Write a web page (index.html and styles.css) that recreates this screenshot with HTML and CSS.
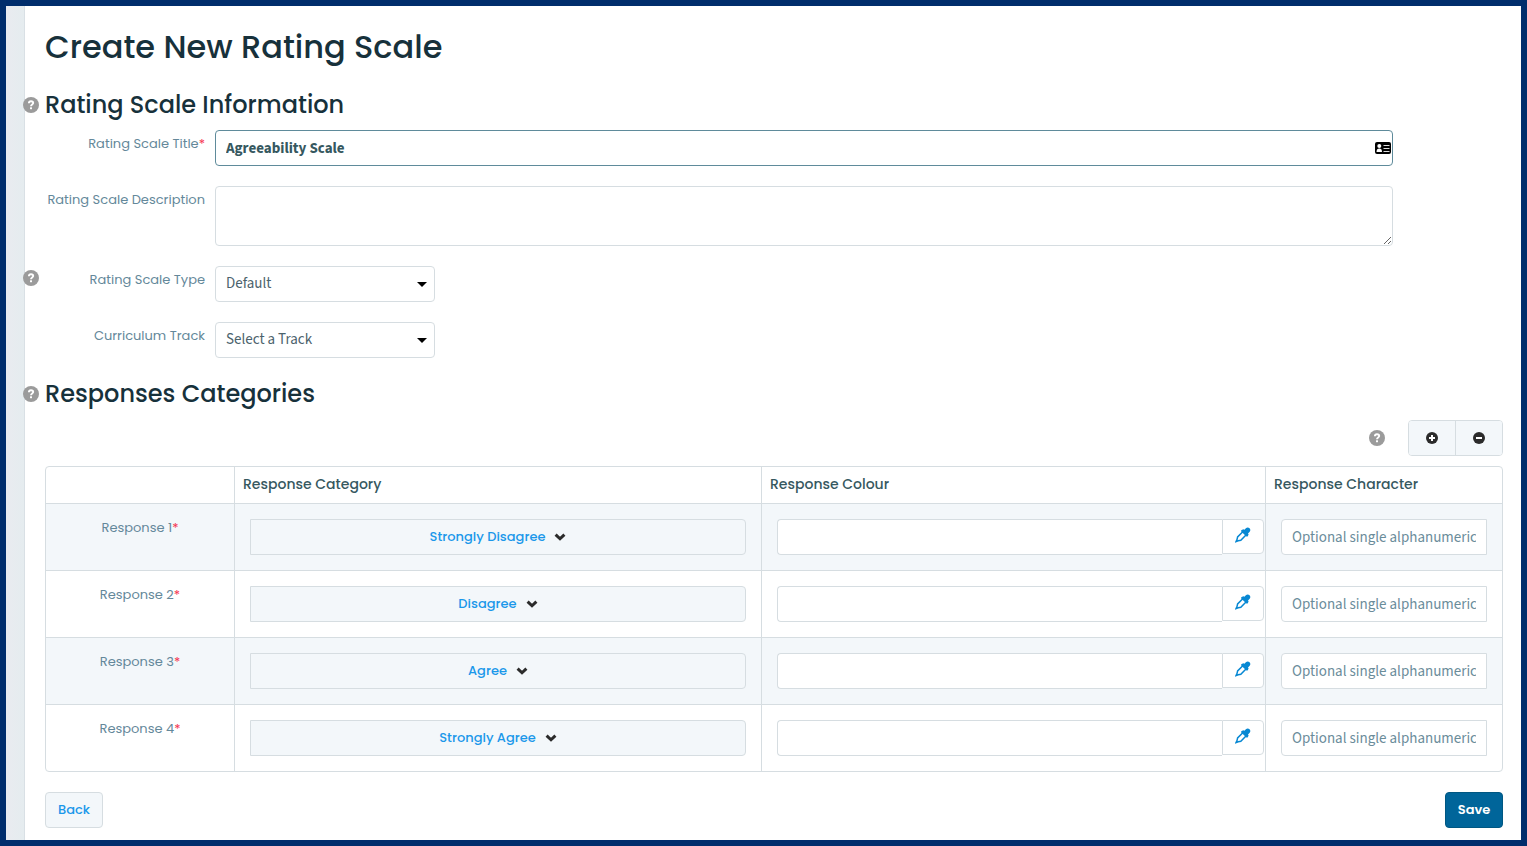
FILE: index.html
```html
<!DOCTYPE html>
<html lang="en">
<head>
<meta charset="utf-8">
<title>Create New Rating Scale</title>
<link rel="stylesheet" href="styles.css">
</head>
<body>
<svg class="defs" aria-hidden="true">
  <symbol id="help" viewBox="0 0 16 16"><circle cx="8" cy="8" r="8" fill="#9b9b9b"/><path d="M5.900 6.300C5.900 4.900 6.800 4.300 8 4.300S10.200 5 10.200 6.100C10.200 7.500 8 7.500 8 9.200" fill="none" stroke="#fff" stroke-width="1.900"/><rect x="7" y="10.300" width="2" height="1.900" fill="#fff"/></symbol>
  <symbol id="plus" viewBox="0 0 12 12"><circle cx="6" cy="6" r="6" fill="#2b2b2b"/><path d="M6 3v6M3 6h6" stroke="#fff" stroke-width="2"/></symbol>
  <symbol id="minus" viewBox="0 0 12 12"><circle cx="6" cy="6" r="6" fill="#2b2b2b"/><path d="M3 6h6" stroke="#fff" stroke-width="2"/></symbol>
  <symbol id="chevron" viewBox="0 0 12 8"><path d="M1.600 1.600 6 5.800l4.400-4.200" fill="none" stroke="#2b2b2b" stroke-width="3"/></symbol>
  <symbol id="dropper" viewBox="0 0 16 16"><path d="M7.800 4.800 2.600 10 2 12.600 1 14.600 3.200 13.800 5.800 13.200 11 8" fill="none" stroke="#0788d3" stroke-width="1.500"/><path d="M6.200 3.200 8.300 2.200 9.400 2.800 10.900 1.200C13.300-.9 16.800 2.200 14.700 4.800L13 6.400 13.600 7.600 12.600 9.600 11.400 9.500 6.200 4.500Z" fill="#0788d3"/></symbol>
  <symbol id="card" viewBox="0 0 16 12"><rect width="16" height="12" rx="2" fill="#000"/><circle cx="4.300" cy="4" r="2" fill="#fff"/><path d="M1.500 10c0-2.600 1-3.600 2.800-3.600S7 7.400 7 10Z" fill="#fff"/><path d="M8.500 3.500H14.500M8.500 6.500H14.500M8.500 9.500H14.500" stroke="#ddd" stroke-width="1"/></symbol>
</svg>
<div class="frame">
  <aside class="rail"></aside>
  <main class="content">
    <h1 class="title">Create New Rating Scale</h1>
    <form class="form">
      <section class="section">
        <div class="anchor">
          <button type="button" class="help hang" aria-label="Help"><svg><use href="#help"/></svg></button>
          <h2 class="heading">Rating Scale Information</h2>
        </div>
        <div class="fields">
          <div class="field">
            <label class="label" for="t">Rating Scale Title<span class="req">*</span></label>
            <div class="anchor"><input class="control active" id="t" type="text" value="Agreeability Scale"><svg class="card"><use href="#card"/></svg></div>
          </div>
          <div class="field">
            <label class="label" for="d">Rating Scale Description</label>
            <textarea class="control area" id="d"></textarea>
          </div>
          <div class="field anchor">
            <button type="button" class="help hang" aria-label="Help"><svg><use href="#help"/></svg></button>
            <label class="label" for="y">Rating Scale Type</label>
            <div class="pick"><select class="control" id="y"><option>Default</option></select></div>
          </div>
          <div class="field">
            <label class="label" for="k">Curriculum Track</label>
            <div class="pick"><select class="control" id="k"><option>Select a Track</option></select></div>
          </div>
        </div>
      </section>
      <section class="section">
        <div class="anchor">
          <button type="button" class="help hang" aria-label="Help"><svg><use href="#help"/></svg></button>
          <h2 class="heading">Responses Categories</h2>
        </div>
        <div class="tools">
          <button type="button" class="help" aria-label="Help"><svg><use href="#help"/></svg></button>
          <div class="group">
            <button type="button" class="step" aria-label="Add response"><svg><use href="#plus"/></svg></button>
            <button type="button" class="step" aria-label="Remove response"><svg><use href="#minus"/></svg></button>
          </div>
        </div>
        <table class="table">
          <colgroup><col class="c-label"><col class="c-category"><col class="c-colour"><col class="c-char"></colgroup>
          <thead><tr><th></th><th>Response Category</th><th>Response Colour</th><th>Response Character</th></tr></thead>
          <tbody>
            <tr>
              <td class="name"><label for="r1">Response 1<span class="req">*</span></label></td>
              <td><button type="button" class="category" id="r1">Strongly Disagree<svg><use href="#chevron"/></svg></button></td>
              <td class="colour"><div class="combo"><input class="control" type="text" aria-label="Colour 1"><button type="button" class="dropper" aria-label="Pick colour 1"><svg><use href="#dropper"/></svg></button></div></td>
              <td><input class="control char" type="text" aria-label="Character 1" placeholder="Optional single alphanumeric"></td>
            </tr>
            <tr>
              <td class="name"><label for="r2">Response 2<span class="req">*</span></label></td>
              <td><button type="button" class="category" id="r2">Disagree<svg><use href="#chevron"/></svg></button></td>
              <td class="colour"><div class="combo"><input class="control" type="text" aria-label="Colour 2"><button type="button" class="dropper" aria-label="Pick colour 2"><svg><use href="#dropper"/></svg></button></div></td>
              <td><input class="control char" type="text" aria-label="Character 2" placeholder="Optional single alphanumeric"></td>
            </tr>
            <tr>
              <td class="name"><label for="r3">Response 3<span class="req">*</span></label></td>
              <td><button type="button" class="category" id="r3">Agree<svg><use href="#chevron"/></svg></button></td>
              <td class="colour"><div class="combo"><input class="control" type="text" aria-label="Colour 3"><button type="button" class="dropper" aria-label="Pick colour 3"><svg><use href="#dropper"/></svg></button></div></td>
              <td><input class="control char" type="text" aria-label="Character 3" placeholder="Optional single alphanumeric"></td>
            </tr>
            <tr>
              <td class="name"><label for="r4">Response 4<span class="req">*</span></label></td>
              <td><button type="button" class="category" id="r4">Strongly Agree<svg><use href="#chevron"/></svg></button></td>
              <td class="colour"><div class="combo"><input class="control" type="text" aria-label="Colour 4"><button type="button" class="dropper" aria-label="Pick colour 4"><svg><use href="#dropper"/></svg></button></div></td>
              <td><input class="control char" type="text" aria-label="Character 4" placeholder="Optional single alphanumeric"></td>
            </tr>
          </tbody>
        </table>
      </section>
      <div class="actions">
        <button type="button" class="btn">Back</button>
        <button type="submit" class="btn primary">Save</button>
      </div>
    </form>
  </main>
</div>
</body>
</html>
```
FILE: styles.css
```css
* { box-sizing: border-box; }
body {
  margin: 0;
  color: #64889a;
  background: #fff;
  font: 400 13px/20px Poppins, Inter, sans-serif;
}
button { margin: 0; padding: 0; font: inherit; cursor: pointer; }
svg { display: block; }
.defs { position: absolute; width: 0; height: 0; }
.frame { display: flex; min-height: 100vh; border: 6px solid #002d6c; }
.rail {
  flex: none;
  width: 19px;
  border-right: 1px solid #d9e0e5;
  background: linear-gradient(90deg, #e9ebf0, #e5ecef);
}
.content { flex: 1; min-width: 0; padding: 20px 18px 12px 20px; }
.title, .heading { margin: 0; color: #17313b; font-weight: 500; }
.title { margin-bottom: 22px; font-size: 32px; line-height: 42px; }
.heading { font-size: 24px; line-height: 30px; }
.anchor { position: relative; }
.section { margin-bottom: 20px; }
.section + .section { margin-top: 21px; }
.help { flex: none; width: 16px; height: 16px; border: 0; border-radius: 50%; background: none; }
.help svg { width: 16px; height: 16px; }
.hang { position: absolute; left: -22px; top: 7px; }
.field .hang { top: 4px; }
.fields { display: grid; gap: 20px; margin: 10px 110px 0 0; }
.field { display: grid; grid-template-columns: 160px minmax(0, 1fr); gap: 10px; }
.label { padding-top: 4px; text-align: right; }
.label, .name { font-weight: 400; }
.req { color: #f5344f; }
.control {
  display: block;
  width: 100%;
  height: 36px;
  padding: 0 10px;
  border: 1px solid #d6dde1;
  border-radius: 4px;
  background: #fff;
  color: #4b626c;
  font: 400 15px/20px "Source Sans 3", "Source Sans Pro", "Noto Sans", sans-serif;
}
.active { border-color: #5f8b9b; color: #36585f; font-weight: 700; }
.card { position: absolute; right: 2px; top: 12px; width: 16px; height: 12px; }
.area { height: 60px; resize: vertical; }
.pick { position: relative; width: 220px; }
.pick select { appearance: none; }
.pick::after {
  content: "";
  position: absolute;
  right: 8px;
  top: 16px;
  border: 5px solid transparent;
  border-top-color: #000;
  border-bottom: 0;
  pointer-events: none;
}
.tools { display: flex; justify-content: flex-end; align-items: center; gap: 23px; margin: 11px 0 10px; }
.group { display: flex; overflow: hidden; border: 1px solid #d6dde1; border-radius: 4px; }
.step { display: grid; place-items: center; width: 46px; height: 34px; border: 0; background: #f3f7fa; }
.step + .step { width: 47px; border-left: 1px solid #d6dde1; }
.step svg { width: 12px; height: 12px; }
.table {
  width: 100%;
  table-layout: fixed;
  border: 1px solid #d6dde1;
  border-radius: 4px;
  border-spacing: 0;
}
.c-label { width: 188px; }
.c-category { width: 527px; }
.c-colour { width: 504px; }
.c-char { width: 237px; }
th { height: 36px; padding: 0 8px 2px; color: #36585f; font-size: 14px; font-weight: 500; text-align: left; }
td { padding: 15px; border-top: 1px solid #d6dde1; }
th + th, td + td { border-left: 1px solid #d6dde1; }
tbody tr:nth-child(odd) { background: #f3f7fa; }
.name { padding-top: 14px; text-align: center; vertical-align: top; }
.colour { padding-right: 1px; }
.category {
  display: flex;
  align-items: center;
  justify-content: center;
  gap: 9px;
  width: 100%;
  height: 36px;
  border: 1px solid #d6dde1;
  border-radius: 0 4px 4px 0;
  background: #f3f7fa;
  color: #1b98ea;
  font-weight: 500;
}
.category svg { width: 12px; height: 8px; }
.combo { display: flex; align-items: flex-start; }
.combo .control { flex: 1; min-width: 0; border-right: 0; border-radius: 4px 0 0 4px; }
.dropper {
  display: grid;
  place-items: center;
  width: 42px;
  height: 35px;
  padding-bottom: 4px;
  border: 1px solid #d6dde1;
  border-radius: 0 4px 4px 0;
  background: #fff;
}
.dropper svg { width: 16px; height: 16px; }
.char { border-radius: 4px 0 0 4px; }
.char::placeholder { color: #6a8c9a; opacity: 1; }
.actions { display: flex; justify-content: space-between; }
.btn {
  width: 58px;
  height: 36px;
  border: 1px solid #d6dde1;
  border-radius: 4px;
  background: #f3f7fa;
  color: #1b98ea;
  font-weight: 500;
}
.primary { border-color: #005782; background: #00659a; color: #fff; font-weight: 600; }
```
